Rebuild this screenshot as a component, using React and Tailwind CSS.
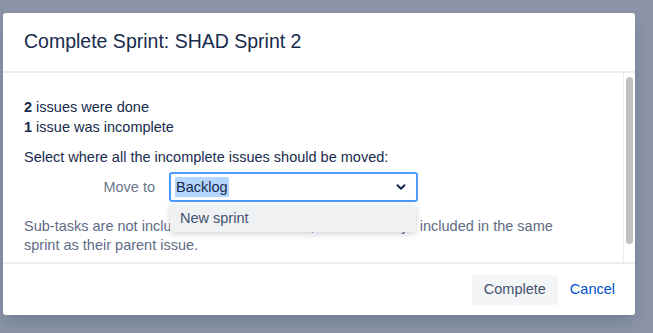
import { ChevronDown } from 'lucide-react'

export default function App() {
  return (
    <div className="h-[333px] w-[653px] overflow-hidden bg-[#8a94a6] pl-[3px] pt-[13px] font-['Liberation_Sans',sans-serif]">
      <div className="flex h-[302px] w-[632px] flex-col rounded-[3px] bg-white shadow-[0_8px_16px_-4px_rgba(9,30,66,0.25)]">
        <div className="flex h-[60px] shrink-0 items-center border-b-2 border-[#ebecf0] px-[21px]">
          <h2 className="text-[19.5px] text-[#172b4d]">Complete Sprint: SHAD Sprint 2</h2>
        </div>

        <div className="relative flex min-h-0 flex-1 border-b-2 border-[#ebecf0]">
          <div className="flex-1 px-[21px] pt-[24px] text-[14.5px] leading-[20px] text-[#172b4d]">
            <p>
              <span className="font-bold">2</span> issues were done
            </p>
            <p>
              <span className="font-bold">1</span> issue was incomplete
            </p>
            <p className="mt-[10px]">Select where all the incomplete issues should be moved:</p>
            <div className="mt-[5px] flex items-center">
              <label className="w-[145px] pr-[14px] text-right text-[#6b778c]">Move to</label>
              <div className="flex h-[30px] w-[249px] items-center justify-between rounded-[3px] border-2 border-[#4c9aff] pl-[4px] pr-[8px]">
                <span className="bg-[#b4d5fe] px-[1px] leading-[20px]">Backlog</span>
                <ChevronDown className="h-[14px] w-[14px] text-[#172b4d]" strokeWidth={3.5} />
              </div>
            </div>
            <p className="mt-[15px] max-w-[560px] leading-[19px] text-[#5e6c84]">
              Sub-tasks are not included in the total above, and are always included in the same sprint as
              their parent issue.
            </p>

            <div className="absolute left-[167px] top-[131px] flex h-[28px] w-[246px] items-center rounded-[3px] bg-[#f0f1f3] pl-[10px] text-[#42526e] shadow-[0_2px_6px_rgba(9,30,66,0.2)]">
              New sprint
            </div>
          </div>
          <div className="w-[12px] shrink-0 border-l border-[#ebecf0] px-[2px] pt-[4px]">
            <div className="h-[167px] w-[7px] rounded-full bg-[#c1c1c1]" />
          </div>
        </div>

        <div className="flex h-[51px] shrink-0 items-center justify-end gap-[10px] pr-[18px] text-[14.5px]">
          <button className="h-[30px] rounded-[3px] bg-[#f4f5f7] px-[12px] text-[#42526e]">Complete</button>
          <button className="h-[30px] px-[2px] text-[#0052cc]">Cancel</button>
        </div>
      </div>
    </div>
  )
}
